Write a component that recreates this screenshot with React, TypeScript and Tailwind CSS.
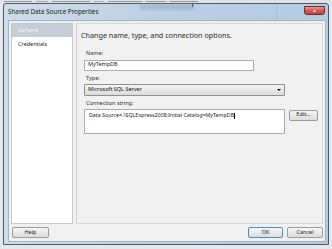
import React from "react";

const font = { fontFamily: '"Noto Sans", "Open Sans", "DejaVu Sans", sans-serif' };

function Btn({ label, w, def }: { label: string; w: string; def?: boolean }) {
  return (
    <div
      className={`${w} h-[11px] flex items-center justify-center rounded-[2px] border ${
        def ? "border-[#4a8fc4]" : "border-[#9a9a9a]"
      } bg-gradient-to-b from-[#f6f6f6] to-[#dcdcdc] text-[5.5px] text-[#222] leading-none`}
    >
      {label}
    </div>
  );
}

export default function App() {
  return (
    <div className="w-[332px] h-[249px] overflow-hidden relative bg-[#e6e9ec]" style={font}>
      {/* background window strip (blurred, behind the dialog) */}
      <div className="absolute left-0 top-0 w-[332px] h-[4px] bg-[#dfe3e7] overflow-hidden">
        <div className="flex gap-[4px] ml-[4px] mt-[0.5px] blur-[0.7px] opacity-60">
          <div className="w-[28px] h-[1.5px] bg-[#666]" />
          <div className="w-[12px] h-[1.5px] bg-[#777]" />
          <div className="w-[38px] h-[1.5px] bg-[#666]" />
          <div className="w-[10px] h-[1.5px] bg-[#888]" />
          <div className="w-[34px] h-[1.5px] bg-[#666]" />
          <div className="w-[20px] h-[1.5px] bg-[#777]" />
          <div className="w-[28px] h-[1.5px] bg-[#666]" />
        </div>
      </div>
      {/* window */}
      <div className="absolute left-[3px] top-[3px] w-[326px] h-[242px] border border-[#4b5867] rounded-t-[3px] bg-gradient-to-r from-[#cfdcea] via-[#bcd0e4] to-[#b4cbe0] flex flex-col">
        {/* title bar */}
        <div className="h-[16px] flex items-start relative">
          <div className="absolute left-[188px] top-0 w-[1px] h-[3px] bg-[#222]" />
          <div className="absolute left-[272px] top-0 w-[1px] h-[16px] bg-[#a9bfd4]" />
          <div className="absolute left-[136px] top-0 w-[54px] h-[6px] bg-[#8ea8c3] opacity-50 blur-[1px]" />
          <span className="ml-[4px] mt-[5px] text-[6.3px] leading-none text-[#1a1a1a]">
            Shared Data Source Properties
          </span>
          <div className="absolute right-[3px] top-[2px] w-[21px] h-[9px] rounded-b-[3px] border border-[#6b2a2a] bg-gradient-to-b from-[#e6a093] via-[#d0574b] to-[#c0463a] flex items-center justify-center">
            <span className="text-[6px] leading-none text-white font-bold">×</span>
          </div>
        </div>
        {/* client */}
        <div className="ml-[4px] mr-[2px] h-[222px] bg-[#f0f0f0] border border-[#9fb2c6] flex flex-col px-[2px] pt-[2px]">
          <div className="flex gap-[3px] h-[201px]">
            {/* left list */}
            <div className="w-[62px] bg-white border border-[#c8c8c8] flex flex-col text-[5.5px] leading-none">
              <div className="h-[13px] bg-[#c4ced8] flex items-center pl-[6px] text-[#f4f6f8]">General</div>
              <div className="h-[13px] flex items-center pl-[6px] text-[#222] mt-[1px]">Credentials</div>
            </div>
            {/* right panel */}
            <div className="flex-1 bg-[#f1f1f1] border border-[#d6d6d6] flex flex-col pl-[4px] relative">
              <div className="mt-[8px] text-[7.2px] leading-none text-[#2a2a2a]">
                Change name, type, and connection options.
              </div>
              <div className="ml-[5px] mt-[12px] text-[5.5px] leading-none text-[#333]">Name:</div>
              <div className="ml-[3px] mt-[3px] w-[170px] h-[11px] bg-white border border-[#abadb3] flex items-center pl-[3px] text-[5.5px] leading-none text-[#222]">
                MyTempDB
              </div>
              <div className="ml-[5px] mt-[5px] text-[5.5px] leading-none text-[#333]">Type:</div>
              <div className="ml-[3px] mt-[3px] w-[201px] h-[12px] border border-[#8e8f8f] rounded-[1px] bg-gradient-to-b from-[#f4f4f4] to-[#dcdcdc] flex items-center pl-[3px] pr-[3px] text-[5.5px] leading-none text-[#111]">
                <span className="flex-1">Microsoft SQL Server</span>
                <span className="w-0 h-0 border-l-[2px] border-r-[2px] border-t-[2.5px] border-l-transparent border-r-transparent border-t-black" />
              </div>
              <div className="ml-[5px] mt-[5px] text-[5.5px] leading-none text-[#333]">Connection string:</div>
              <div className="flex items-start mt-[2px] ml-[3px]">
                <div className="w-[201px] h-[25px] bg-white border border-[#abadb3] pl-[4px] pt-[3px] text-[5.3px] leading-none text-[#222] flex">
                  <span>Data Source=.\SQLExpress2008;Initial Catalog=MyTempDB</span>
                  <span className="w-[0.5px] h-[6px] bg-black" />
                </div>
                <div className="ml-[4px] mt-[1px]">
                  <Btn label="Edit..." w="w-[29px]" />
                </div>
              </div>
            </div>
          </div>
          <div className="flex mt-[3px] items-center">
            <div className="ml-[1px]">
              <Btn label="Help" w="w-[37px]" />
            </div>
            <div className="flex-1" />
            <Btn label="OK" w="w-[35px]" def />
            <div className="w-[4px]" />
            <Btn label="Cancel" w="w-[36px]" />
          </div>
        </div>
      </div>
    </div>
  );
}
